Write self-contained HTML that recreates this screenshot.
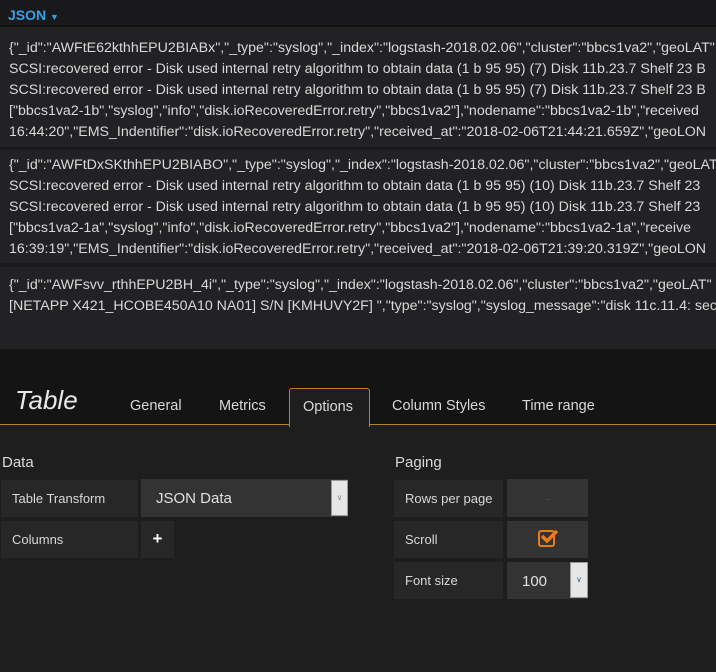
<!DOCTYPE html>
<html><head><style>
*{margin:0;padding:0;box-sizing:border-box}
body{width:716px;height:672px;overflow:hidden;background:#1f1e1f;font-family:"Liberation Sans",sans-serif;color:#d8d9da;position:relative}
.a{position:absolute;white-space:nowrap}
.top{left:0;top:0;width:716px;height:350px;background:#19181a}
.row{left:0;width:716px;background:#222123;padding:11px 0 0 9px;font-size:14.2px;line-height:21px;color:#d8d9da;overflow:hidden}
.lbl{background:#272727;font-size:13px;color:#d8d9da;padding-left:11px;line-height:37px}
.val{background:#333}
.tab{font-size:14.5px;color:#d8d9da;top:398px}
</style></head><body>
<div class="a top"></div>
<div class="a" style="left:0;top:25px;width:716px;height:2px;background:#111"></div>
<div class="a" style="left:8px;top:7px;font-size:14px;font-weight:bold;color:#33a2e5">JSON <span style="font-size:9px">&#9660;</span></div>
<div class="a row" style="top:27px;height:120px">{"_id":"AWFtE62kthhEPU2BIABx","_type":"syslog","_index":"logstash-2018.02.06","cluster":"bbcs1va2","geoLAT"<br>SCSI:recovered error - Disk used internal retry algorithm to obtain data (1 b 95 95) (7) Disk 11b.23.7 Shelf 23 B<br>SCSI:recovered error - Disk used internal retry algorithm to obtain data (1 b 95 95) (7) Disk 11b.23.7 Shelf 23 B<br>["bbcs1va2-1b","syslog","info","disk.ioRecoveredError.retry","bbcs1va2"],"nodename":"bbcs1va2-1b","received<br>16:44:20","EMS_Indentifier":"disk.ioRecoveredError.retry","received_at":"2018-02-06T21:44:21.659Z","geoLON</div>
<div class="a row" style="top:150px;height:113px;padding-top:5px">{"_id":"AWFtDxSKthhEPU2BIABO","_type":"syslog","_index":"logstash-2018.02.06","cluster":"bbcs1va2","geoLAT<br>SCSI:recovered error - Disk used internal retry algorithm to obtain data (1 b 95 95) (10) Disk 11b.23.7 Shelf 23<br>SCSI:recovered error - Disk used internal retry algorithm to obtain data (1 b 95 95) (10) Disk 11b.23.7 Shelf 23<br>["bbcs1va2-1a","syslog","info","disk.ioRecoveredError.retry","bbcs1va2"],"nodename":"bbcs1va2-1a","receive<br>16:39:19","EMS_Indentifier":"disk.ioRecoveredError.retry","received_at":"2018-02-06T21:39:20.319Z","geoLON</div>
<div class="a row" style="top:267px;height:82px;padding-top:8px">{"_id":"AWFsvv_rthhEPU2BH_4i","_type":"syslog","_index":"logstash-2018.02.06","cluster":"bbcs1va2","geoLAT"<br>[NETAPP X421_HCOBE450A10 NA01] S/N [KMHUVY2F] ","type":"syslog","syslog_message":"disk 11c.11.4: secto</div>
<div class="a" style="left:0;top:350px;width:716px;height:75px;background:#141414"></div>
<div class="a" style="left:15px;top:385px;font-size:26px;font-style:italic;color:#e8e8e8">Table</div>
<div class="a tab" style="left:130px">General</div>
<div class="a tab" style="left:219px">Metrics</div>
<div class="a" style="left:289px;top:388px;width:81px;height:39px;background:#1f1e1f;border:1px solid #b8802a;border-bottom:none;border-radius:3px 3px 0 0"></div>
<div class="a tab" style="left:303px;top:399px">Options</div>
<div class="a tab" style="left:392px">Column Styles</div>
<div class="a tab" style="left:522px">Time range</div>
<div class="a" style="left:0;top:424px;width:289px;height:1px;background:#b8802a"></div>
<div class="a" style="left:370px;top:424px;width:346px;height:1px;background:#b8802a"></div>
<div class="a" style="left:2px;top:454px;font-size:15px">Data</div>
<div class="a lbl" style="left:1px;top:480px;width:137px;height:37px">Table Transform</div>
<div class="a val" style="left:141px;top:479px;width:207px;height:38px;font-size:15px;padding-left:15px;line-height:40px;color:#e0e0e0">JSON Data</div>
<div class="a" style="left:331px;top:480px;width:17px;height:36px;background:#e6e6e6;border:1px solid #999;color:#888;font-size:8px;text-align:center;line-height:34px">&#8744;</div>
<div class="a lbl" style="left:1px;top:521px;width:137px;height:37px">Columns</div>
<div class="a" style="left:141px;top:521px;width:33px;height:37px;background:#272727;color:#fff;font-weight:bold;font-size:17px;text-align:center;line-height:35px">+</div>
<div class="a" style="left:395px;top:454px;font-size:15px">Paging</div>
<div class="a lbl" style="left:394px;top:480px;width:109px;height:37px">Rows per page</div>
<div class="a val" style="left:507px;top:479px;width:81px;height:38px;color:#666;font-size:9px;text-align:center;line-height:36px">..</div>
<div class="a lbl" style="left:394px;top:521px;width:109px;height:37px">Scroll</div>
<div class="a val" style="left:507px;top:521px;width:81px;height:37px"></div>
<div class="a" style="left:538px;top:530px;width:17px;height:17px;border:2px solid #eb7b18;border-radius:3px"></div>
<svg class="a" style="left:538px;top:527px" width="22" height="18"><path d="M4 9 L9 14 L19 4" stroke="#eb7b18" stroke-width="3.5" fill="none"/></svg>
<div class="a lbl" style="left:394px;top:562px;width:109px;height:37px">Font size</div>
<div class="a val" style="left:507px;top:562px;width:81px;height:37px;font-size:15px;padding-left:15px;line-height:40px;color:#e0e0e0">100</div>
<div class="a" style="left:570px;top:562px;width:18px;height:36px;background:#e6e6e6;border:1px solid #999;color:#468;font-size:8px;text-align:center;line-height:34px">&#8744;</div>
</body></html>
